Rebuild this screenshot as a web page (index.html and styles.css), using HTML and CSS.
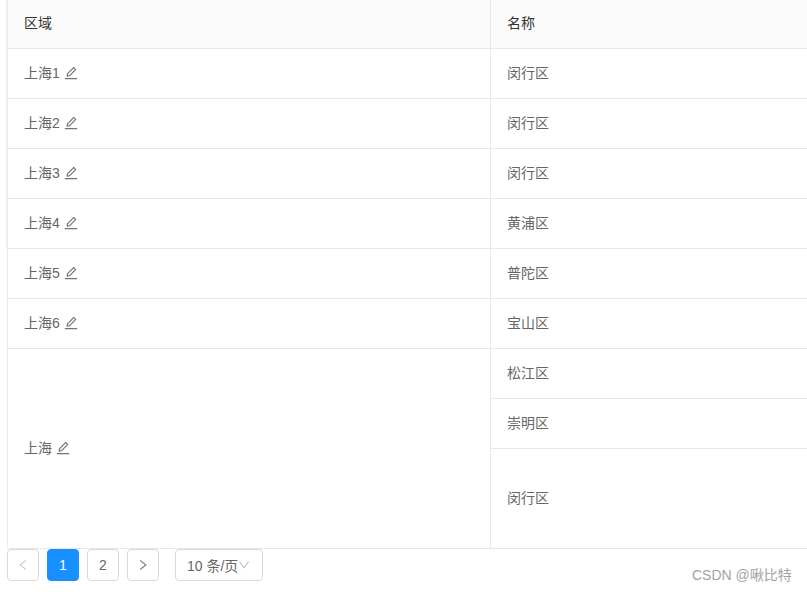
FILE: index.html
```html
<!DOCTYPE html>
<html lang="zh-CN">
<head>
<meta charset="utf-8">
<title>区域表格</title>
<link rel="stylesheet" href="styles.css">
</head>
<body>
<svg class="defs" aria-hidden="true">
  <symbol id="edit" viewBox="64 64 896 896"><path d="M257.7 752c2 0 4-.2 6-.5L431.9 722c2-.4 3.9-1.3 5.3-2.8l423.9-423.9a9.96 9.96 0 0 0 0-14.1L694.9 114.9c-1.9-1.9-4.4-2.9-7.1-2.9s-5.2 1-7.1 2.9L256.8 538.8c-1.5 1.5-2.4 3.3-2.8 5.3l-29.5 168.2a33.5 33.5 0 0 0 9.4 29.8c6.6 6.4 14.9 9.9 23.8 9.9zm67.4-174.4L687.8 215l73.3 73.3-362.7 362.6-88.9 15.7 15.6-89zM880 836H144c-17.7 0-32 14.3-32 32v36c0 4.4 3.6 8 8 8h784c4.4 0 8-3.6 8-8v-36c0-17.7-14.3-32-32-32z"/></symbol>
</svg>
<main class="page">
  <div class="table-wrap">
    <table class="table">
      <colgroup><col class="col-a"><col class="col-b"></colgroup>
      <thead>
        <tr><th class="area">区域</th><th>名称</th></tr>
      </thead>
      <tbody>
        <tr><td class="area">上海1<svg class="edit"><use href="#edit"/></svg></td><td>闵行区</td></tr>
        <tr><td class="area">上海2<svg class="edit"><use href="#edit"/></svg></td><td>闵行区</td></tr>
        <tr><td class="area">上海3<svg class="edit"><use href="#edit"/></svg></td><td>闵行区</td></tr>
        <tr><td class="area">上海4<svg class="edit"><use href="#edit"/></svg></td><td>黄浦区</td></tr>
        <tr><td class="area">上海5<svg class="edit"><use href="#edit"/></svg></td><td>普陀区</td></tr>
        <tr><td class="area">上海6<svg class="edit"><use href="#edit"/></svg></td><td>宝山区</td></tr>
        <tr><td class="area" rowspan="3">上海<svg class="edit"><use href="#edit"/></svg></td><td>松江区</td></tr>
        <tr><td>崇明区</td></tr>
        <tr class="tall"><td>闵行区</td></tr>
      </tbody>
    </table>
  </div>
  <nav class="pagination">
    <button class="page-btn disabled" type="button"><svg class="arrow" viewBox="64 64 896 896"><path d="M724 218.3V141c0-6.7-7.7-10.4-12.9-6.3L260.3 486.8a31.86 31.86 0 0 0 0 50.3l450.8 352.1c5.3 4.1 12.9.4 12.9-6.3v-77.3c0-4.9-2.3-9.6-6.1-12.6l-360-281 360-281.1c3.8-3 6.1-7.7 6.1-12.6z"/></svg></button>
    <button class="page-btn active" type="button">1</button>
    <button class="page-btn" type="button">2</button>
    <button class="page-btn" type="button"><svg class="arrow" viewBox="64 64 896 896"><path d="M765.7 486.8L314.9 134.7A7.97 7.97 0 0 0 302 141v77.3c0 4.9 2.3 9.6 6.1 12.6l360 281.1-360 281.1c-3.9 3-6.1 7.7-6.1 12.6V883c0 6.7 7.7 10.4 12.9 6.3l450.8-352.1a31.96 31.96 0 0 0 0-50.4z"/></svg></button>
    <div class="size-select">10 条/页<svg class="chevron" viewBox="64 64 896 896"><path d="M884 256h-75c-5.1 0-9.9 2.5-12.9 6.6L512 654.2 227.9 262.6c-3-4.1-7.8-6.6-12.9-6.6h-75c-6.5 0-10.3 7.4-6.5 12.7l352.6 486.1c12.8 17.6 39 17.6 51.7 0l352.6-486.1c3.9-5.3.1-12.7-6.4-12.7z"/></svg></div>
  </nav>
  <div class="watermark">CSDN @啾比特</div>
</main>
</body>
</html>
```
FILE: styles.css
```css
* { box-sizing: border-box; }
html, body { margin: 0; background: #fff; }
body {
  width: 807px;
  height: 592px;
  overflow: hidden;
  font-family: "Liberation Sans", "Noto Sans CJK SC", sans-serif;
  font-size: 14px;
  color: #666;
}
.defs { display: none; }
.page { position: relative; height: 592px; padding-left: 7px; overflow: hidden; }
.table-wrap { position: relative; width: 800px; }
.table-wrap::before {
  content: "";
  position: absolute;
  left: -1px;
  top: 0;
  width: 1px;
  height: 248px;
  background: #ededed;
}
.table { width: 800px; table-layout: fixed; border-collapse: separate; border-spacing: 0; border-left: 1px solid #ececec; }
.col-a { width: 483px; }
.col-b { width: 316px; }
th, td {
  padding: 0 16px 4px 16px;
  height: 50px;
  text-align: left;
  font-weight: 400;
  border-bottom: 1px solid #e8e8e8;
}
.area { border-right: 1px solid #e8e8e8; }
th { height: 49px; background: #fafafa; color: #333; }
.tall td { height: 100px; }
.edit { width: 14px; height: 14px; margin-left: 4px; vertical-align: -2px; fill: #737373; }
.pagination { display: flex; align-items: center; gap: 8px; height: 32px; }
.page-btn {
  display: flex;
  align-items: center;
  justify-content: center;
  width: 32px;
  height: 32px;
  padding: 0;
  border: 1px solid #d9d9d9;
  border-radius: 4px;
  background: #fff;
  color: #666;
  font: inherit;
}
.page-btn.active { background: #1890ff; border-color: #1890ff; color: #fff; }
.arrow { width: 12px; height: 12px; fill: #6e6e6e; }
.disabled .arrow { fill: #c4c4c4; }
.size-select {
  display: flex;
  align-items: center;
  width: 88px;
  height: 32px;
  margin-left: 8px;
  padding-left: 11px;
  border: 1px solid #d9d9d9;
  border-radius: 4px;
  white-space: nowrap;
}
.chevron { width: 12px; height: 12px; fill: #bfbfbf; }
.watermark {
  position: absolute;
  left: 692px;
  top: 565px;
  color: #a3a3a3;
  font-size: 14px;
  line-height: 20px;
  white-space: nowrap;
}
```
